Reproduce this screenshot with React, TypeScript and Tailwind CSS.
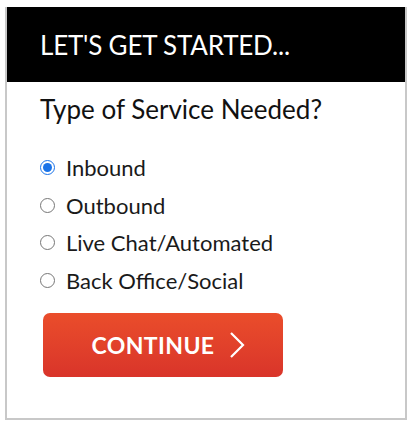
const options = ['Inbound', 'Outbound', 'Live Chat/Automated', 'Back Office/Social']

export default function App() {
  const font = { fontFamily: 'Lato, "Open Sans", sans-serif' }
  return (
    <div className="h-[422px] w-[411px] bg-white pt-[7px] pl-[5px]" style={font}>
      <div className="h-[413px] w-[402px] border-x-2 border-b-2 border-[#c8c8c8] border-t-0 bg-white">
        <div className="flex h-[75px] items-center bg-black pl-[33px] pt-[2px]">
          <h1 className="text-[26px] font-normal tracking-[-0.2px] text-white">LET'S GET STARTED...</h1>
        </div>
        <div className="pl-[33px]">
          <h2 className="mt-[10px] text-[26px] leading-[34px] text-[#111]">Type of Service Needed?</h2>
          <div className="mt-[29px] flex flex-col gap-[12.7px]">
            {options.map((o, i) => (
              <label key={o} className="flex h-[25px] items-center gap-[11px] text-[22px] text-[#1a1a1a]">
                <input
                  type="radio"
                  name="service"
                  defaultChecked={i === 0}
                  className="m-0 h-[15px] w-[15px] accent-[#1a73e8]"
                />
                {o}
              </label>
            ))}
          </div>
          <button className="mt-[20px] ml-[3px] flex h-[64px] w-[240px] items-center justify-center gap-[12px] rounded-[7px] bg-gradient-to-b from-[#ea4d2b] to-[#d9342a] pl-[12px] text-[23px] font-bold tracking-[0.4px] text-white">
            CONTINUE
            <svg width="20" height="28" viewBox="0 0 20 28" fill="none" stroke="white" strokeWidth="2.2">
              <path d="M4 2 L16 14 L4 26" />
            </svg>
          </button>
        </div>
      </div>
    </div>
  )
}
